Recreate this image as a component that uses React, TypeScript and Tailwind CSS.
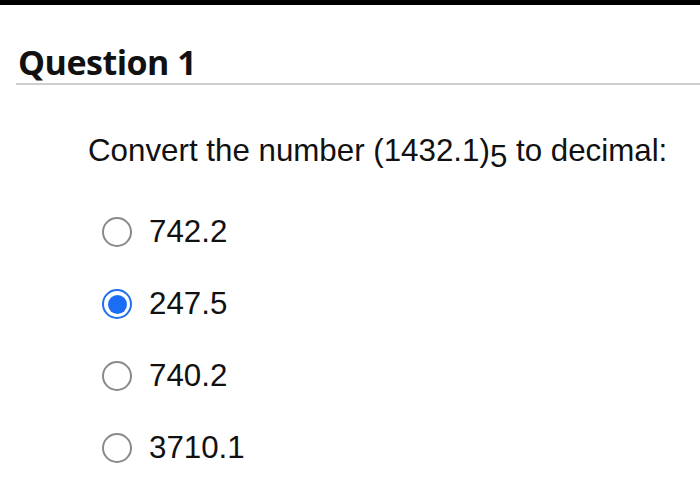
import React from "react";

const options = [
  { label: "742.2", checked: false },
  { label: "247.5", checked: true },
  { label: "740.2", checked: false },
  { label: "3710.1", checked: false },
];

function Radio({ checked }: { checked: boolean }) {
  if (checked) {
    return (
      <div className="w-[30px] h-[30px] rounded-full border-[2px] border-[#1f6ff0] flex items-center justify-center bg-white">
        <div className="w-[19px] h-[19px] rounded-full bg-[#1a6ef5]" />
      </div>
    );
  }
  return <div className="w-[30px] h-[30px] rounded-full border-[2px] border-[#8a8a8a] bg-white" />;
}

export default function App() {
  return (
    <div className="w-[700px] h-[501px] bg-white overflow-hidden">
      <div className="h-[5px] bg-black" />
      <div className="pl-[18px] pt-[36px]">
        <h1
          className="text-[34px] font-bold leading-[42px] text-[#111] tracking-[-0.5px]"
          style={{ fontFamily: '"Open Sans", sans-serif' }}
        >
          Question 1
        </h1>
      </div>
      <div className="ml-[16px] mt-[0px] h-[2px] bg-[#cfcfcf]" />
      <div
        className="pl-[88px] pt-[48px] text-[31.3px] text-[#111] leading-[36px]"
        style={{ fontFamily: '"Liberation Sans", Arial, sans-serif' }}
      >
        <p>
          Convert the number (1432.1)<span className="relative top-[6px]">5</span> to decimal:
        </p>
        <div className="mt-[45px] flex flex-col gap-[36px] pl-[14px]">
          {options.map((o) => (
            <div key={o.label} className="flex items-center gap-[17px]">
              <Radio checked={o.checked} />
              <span>{o.label}</span>
            </div>
          ))}
        </div>
      </div>
    </div>
  );
}
